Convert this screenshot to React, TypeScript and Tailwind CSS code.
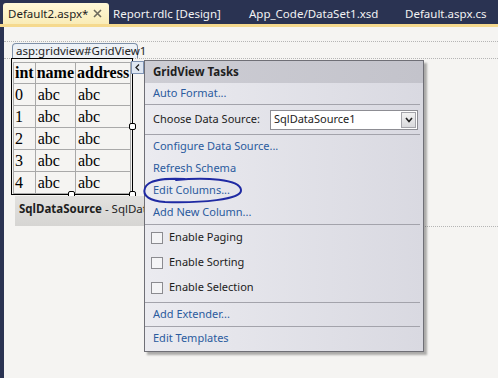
import React from "react";

const ui = { fontFamily: '"Noto Sans", "Open Sans", sans-serif' };
const serif = { fontFamily: '"Liberation Serif", "Times New Roman", serif' };

function Sep() {
  return <div className="h-px bg-[#a3a3ab] mr-[3px]" />;
}

function Link({ children, h = "h-[22px]" }: { children: React.ReactNode; h?: string }) {
  return (
    <div className={`${h} flex items-center pl-[8px] text-[11px] text-[#2b5b9e]`}>{children}</div>
  );
}

function Check({ label }: { label: string }) {
  return (
    <div className="h-[25px] flex items-center pl-[6px] gap-[6px] text-[11px] text-[#1c1c1c]">
      <span className="w-[12px] h-[12px] border border-[#8b8b90] bg-[#f4f4f6]" />
      {label}
    </div>
  );
}

const rows = ["0", "1", "2", "3", "4"];

export default function App() {
  return (
    <div className="w-[498px] h-[378px] relative overflow-hidden bg-[#2a3352] flex flex-col" style={ui}>
      {/* document tabs */}
      <div className="h-[24px] flex items-end text-[11.5px] text-[#f2f2f2] whitespace-nowrap">
        <div className="shrink-0 ml-[3px] w-[106px] h-[21px] flex items-center pl-[5px] rounded-t-[3px] bg-gradient-to-b from-[#fff8d8] to-[#f9ecb8] text-[#1e1e1e]">
          <span className="w-[85px]">Default2.aspx*</span>
          <svg className="shrink-0" width="9" height="9" viewBox="0 0 9 9">
            <path d="M1 1 L8 8 M8 1 L1 8" stroke="#6d6a5c" strokeWidth="1.6" />
          </svg>
        </div>
        <div className="shrink-0 h-[21px] flex items-center pl-[4px] w-[140px]">Report.rdlc [Design]</div>
        <div className="shrink-0 h-[21px] flex items-center w-[156px]">App_Code/DataSet1.xsd</div>
        <div className="h-[21px] flex items-center">Default.aspx.cs</div>
      </div>
      <div className="h-[3px] bg-[#f5d98e]" />

      {/* designer surface */}
      <div className="flex-1 ml-[4px] relative bg-[#f5f4f2]">
        <div className="absolute left-0 right-0 top-[14px] border-t border-dotted border-[#b5b5b5]" />
        <div className="absolute left-0 right-0 top-[31px] border-t border-dotted border-[#b5b5b5]" />
        <div className="absolute left-[417px] right-0 top-[199px] border-t border-dotted border-[#b5b5b5]" />

        {/* element tag */}
        <div className="absolute left-[8px] top-[16px] w-[126px] h-[15px] rounded-t-[4px] border border-b-0 border-[#7d8fa8] bg-[#edf1f6] text-[11.5px] leading-[14px] text-[#222] pl-[3px]">
          asp:gridview#GridView1
        </div>

        {/* gridview */}
        <div className="absolute left-[7px] top-[31px] w-[122px] h-[137px] border border-black p-[1px] pt-[3px]">
          <table className="border-collapse text-[16px] text-black leading-none" style={serif}>
            <thead>
              <tr className="h-[21px]">
                <th className="w-[21px] border border-[#a9a9a9] px-[1px] text-left font-bold">int</th>
                <th className="w-[40px] border border-[#a9a9a9] px-[1px] text-left font-bold">name</th>
                <th className="w-[55px] border border-[#a9a9a9] px-[1px] text-left font-bold">address</th>
              </tr>
            </thead>
            <tbody>
              {rows.map((r) => (
                <tr key={r} className="h-[22px]">
                  <td className="border border-[#a9a9a9] px-[1px]">{r}</td>
                  <td className="border border-[#a9a9a9] px-[2px]">abc</td>
                  <td className="border border-[#a9a9a9] px-[2px]">abc</td>
                </tr>
              ))}
            </tbody>
          </table>
        </div>
        {/* resize handles */}
        <span className="absolute left-[125px] top-[96px] w-[7px] h-[7px] rounded-[2px] border border-black bg-white" />
        <span className="absolute left-[64px] top-[164px] w-[7px] h-[7px] rounded-[2px] border border-black bg-white" />
        <span className="absolute left-[125px] top-[164px] w-[7px] h-[7px] rounded-[2px] border border-black bg-white" />

        {/* SqlDataSource control, runs under the tasks panel */}
        <div className="absolute left-[11px] top-[169px] w-[129px] h-[30px] overflow-hidden whitespace-nowrap bg-gradient-to-b from-[#e2e1df] to-[#d6d5d3] pl-[4px] pt-[4px] text-[11.5px] text-[#1e1e1e]">
          <span className="font-bold">SqlDataSource</span> - SqlDat
        </div>

        {/* smart tag glyph */}
        <div className="absolute left-[127px] top-[34px] w-[13px] h-[13px] border border-[#7f93b3] bg-[#dfe7f2] flex items-center justify-center">
          <svg width="7" height="9" viewBox="0 0 7 9">
            <path d="M5 1.5 L2 4.5 L5 7.5" fill="none" stroke="#222" strokeWidth="1.3" />
          </svg>
        </div>

        {/* GridView Tasks panel */}
        <div className="absolute left-[140px] top-[33px] w-[280px] h-[292px] border border-[#6f6f76] bg-gradient-to-r from-[#ebebf0] to-[#d9d9e1] shadow-[3px_3px_2px_rgba(0,0,0,0.3)] flex flex-col">
          <div className="h-[22px] flex items-center pl-[8px] bg-gradient-to-r from-[#cdcdd4] to-[#c3c3cb] text-[11.5px] font-bold text-[#1e1e1e]">
            GridView Tasks
          </div>
          <Link h="h-[21px]">Auto Format...</Link>
          <Sep />
          <div className="h-[29px] flex items-center pl-[8px] text-[11px] text-[#1c1c1c]">
            <span className="w-[117px]">Choose Data Source:</span>
            <div className="w-[148px] h-[20px] border border-[#8d8d93] bg-white flex items-center">
              <span className="flex-1 pl-[3px] text-[11px]">SqlDataSource1</span>
              <span className="w-[15px] h-[16px] mr-[1px] border border-[#a4a4aa] bg-gradient-to-b from-[#f2f2f2] to-[#d9d9dc] flex items-center justify-center">
                <svg width="8" height="6" viewBox="0 0 8 6">
                  <path d="M1 1 L4 4.5 L7 1" fill="none" stroke="#222" strokeWidth="1.6" />
                </svg>
              </span>
            </div>
          </div>
          <Sep />
          <Link>Configure Data Source...</Link>
          <Link>Refresh Schema</Link>
          <Link>Edit Columns...</Link>
          <Link h="h-[23px]">Add New Column...</Link>
          <Sep />
          <Check label="Enable Paging" />
          <Check label="Enable Sorting" />
          <Check label="Enable Selection" />
          <div className="h-[2px]" />
          <Sep />
          <Link h="h-[23px]">Add Extender...</Link>
          <Sep />
          <Link h="h-[23px]">Edit Templates</Link>
        </div>
      </div>

      {/* hand-drawn marker */}
      <svg className="absolute left-0 top-0 pointer-events-none" width="498" height="378">
        <path
          d="M176 180 C 205 177, 240 179, 241 190 C 242 200, 200 203, 165 202 C 150 201, 142 196, 145 188 C 148 180, 162 178, 185 179"
          fill="none"
          stroke="#1f2aa3"
          strokeWidth="2"
          strokeLinecap="round"
        />
      </svg>
    </div>
  );
}
